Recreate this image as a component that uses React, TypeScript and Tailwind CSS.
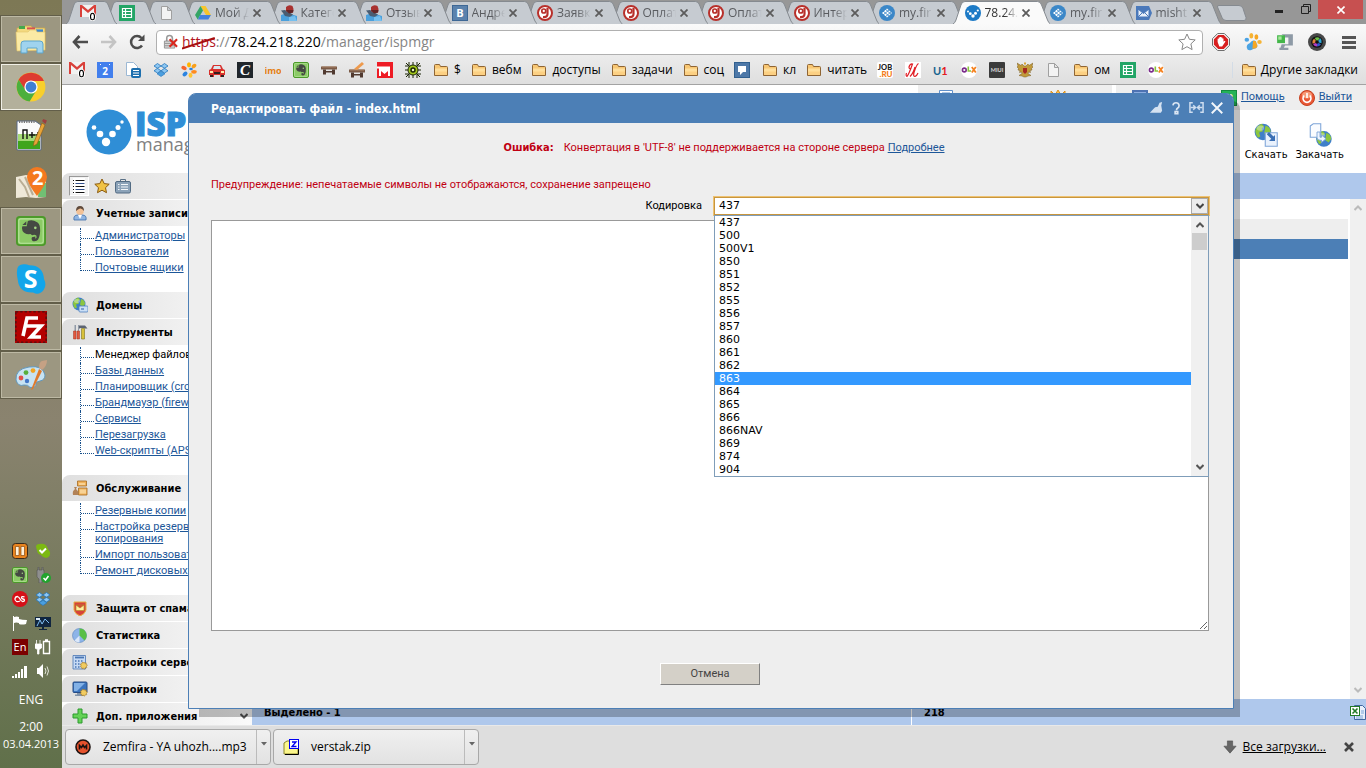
import { useState } from 'react'
import type { ReactNode } from 'react'

const folder = (
  <>
    <path d="M1.5 13.5V3.5q0-1 1-1h4l1 2h6q1 0 1 1v8z" fill="#f8c774" stroke="#8f6534" />
    <path d="M2 6.5h12v6.5H2z" fill="#ffdf9c" />
    <path d="M2 9.5h12v3.5H2z" fill="#fcd083" />
  </>
)
const page = <path d="M3.5 1.5h6l4 4v9h-10zM9.5 1.5v4h4" fill="#f3f3f3" stroke="#a0a0a0" />
const globe = (
  <>
    <circle cx="7" cy="7" r="6.5" fill="#3f7fc9" />
    <path d="M1 6q1-4 5-5.500l2 2-2 2 1 2-3 1 1 3-2 1q-2-3-2-5.500M9 2q4 1 4 5l-2 3-3-2z" fill="#8cc63f" />
    <ellipse cx="5" cy="4" rx="3" ry="2" fill="#fff" opacity=".35" />
  </>
)
const elephant = (
  <path
    d="M6.300 2.600Q9 1.800 11 3.200q1.500.5 1.800 3 .4 3.500-1 6.300-.9 1.300-3 .8-1-.8-.3-2l1.800-.4v1.200q1-.4.6-1.600-1-.9-2.300-.2L7.700 9.600Q4.600 10 3.500 8 2.800 6.500 3.400 5.500h2.300z M5.500 2.800v2H3.400z"
    fill="#454943"
  />
)
const dropbox = (
  <>
    <path d="M4.500 1.500 8 4 4.500 6.300 1 4zM11.500 1.500 15 4l-3.500 2.300L8 4zM4.500 6.300 8 8.800 4.500 11 1 8.800zM11.500 6.300 15 8.800 11.500 11 8 8.800z" fill="#8ec7f2" stroke="#2376bb" strokeWidth=".8" />
    <path d="m4 11.800 4-2.500 4 2.500-4 2.700z" fill="#4a9fe0" stroke="#2376bb" strokeWidth=".6" />
  </>
)
const paw = (
  <>
    <ellipse cx="6.500" cy="2.500" rx="1.800" ry="2.400" fill="#f6b333" />
    <ellipse cx="11" cy="3.500" rx="1.700" ry="2.400" fill="#f6a623" />
    <ellipse cx="2.500" cy="6" rx="2" ry="1.800" fill="#4ba3e3" />
    <ellipse cx="13.800" cy="8" rx="2" ry="1.700" fill="#f6b333" />
    <path d="M7 7q4-1 4 2 2 3-.5 4.500-2.500.5-4 1.500Q3 16 2.500 13T5 9z" fill="#4ba3e3" />
    <path d="M8 7q3-.5 3 2 2 3-.5 4.500l-3 .5z" fill="#f6a623" />
  </>
)
const bench = (
  <>
    <path d="M0 4.500h16v3H0z" fill="#7b5a46" />
    <path d="M1 4.500h14v1H1z" fill="#a98367" />
    <path d="M2 7.500h3v5H2zm9 0h3v5h-3zM5 9h6v1.500H5z" fill="#513a30" />
  </>
)
const gear = <path d="m12 8 .8 1.300 1.500-.4-.2 1.500 1.400.8-1.200 1 .5 1.500-1.600.1-.7 1.400-1.200-1-1.400.6-.2-1.600-1.500-.5.9-1.300-.8-1.300 1.500-.3.300-1.500 1.300.7z" fill="#f2cc60" stroke="#9f7522" strokeWidth=".6" />

const icons: Record<string, ReactNode> = {
  folder,
  page,
  elephantApp: (
    <>
      <rect x=".5" y=".5" width="15" height="15" rx="1.500" fill="#8ccb66" stroke="#4c9a2a" />
      <rect x="1.500" y="1.500" width="13" height="13" rx="1" fill="none" stroke="#b9e6a0" strokeWidth=".6" />
      {elephant}
      <circle cx="10.300" cy="6.300" r=".7" fill="#a7d887" />
    </>
  ),
  dropbox,
  bench,
  gmail: (
    <>
      <rect y="0" width="16" height="12" fill="#f2f2f2" />
      <path d="M0 12V0h2l6 5 6-5h2v12h-2V3L8 8 2 3v9z" fill="#d9403a" />
      <ellipse cx="12.500" cy="11.500" rx="3.500" ry="4.500" fill="#fff" />
      <ellipse cx="12.500" cy="11.500" rx="2" ry="3.300" fill="none" stroke="#000" strokeWidth="1.100" />
    </>
  ),
  sheets: (
    <>
      <rect width="16" height="16" fill="#23a566" />
      <path d="M3.500 3.500h9v9h-9zM3.500 6.500h9M3.500 9.500h9M6.500 3.500v9" fill="none" stroke="#fff" strokeWidth="1.200" />
    </>
  ),
  drive: (
    <>
      <path d="M5.500 1h5l5.500 9h-5z" fill="#f7c52b" />
      <path d="M5.500 1 8 5.500 2.700 14.500 0 10z" fill="#35a567" />
      <path d="M5.200 10H16l-2.700 4.500H2.700z" fill="#4381dd" />
    </>
  ),
  cat: (
    <>
      <path d="M0 10 6 8l10 3v5H0z" fill="#4ba0dc" />
      <path d="M0 5.500 4 5l8 4.500-3 2.500-5-1-2-3z" fill="#4a5d72" />
      <path d="M5 2q3-3 6.500-1l1 3-.5 3.500-4 .5-3-2z" fill="#a93230" />
      <path d="M5 5h7.500L12 7.500 8 8.500z" fill="#612526" />
      <path d="m8 12 6-1 2 5H8z" fill="#76c0ef" />
    </>
  ),
  vk: (
    <>
      <rect x=".5" y=".5" width="15" height="15" fill="#5b82ad" stroke="#3d6795" />
      <text x="8" y="12" textAnchor="middle" fontSize="11" fontWeight="700" fontFamily="Open Sans, sans-serif" fill="#fff">B</text>
    </>
  ),
  nine: (
    <>
      <circle cx="8" cy="8" r="7" fill="#fff" stroke="#b8302b" strokeWidth="2" />
      <circle cx="6.800" cy="6" r="2" fill="none" stroke="#b8302b" strokeWidth="1.700" />
      <path d="M10.500 3v6q0 3.500-4.500 3" fill="none" stroke="#b8302b" strokeWidth="2.200" />
    </>
  ),
  first: (
    <>
      <circle cx="8" cy="8" r="8" fill="#3b87c8" />
      <path d="m8 3.500 5 4.500-5 4.500L3 8z" fill="#fff" />
      <path d="m3 5 8 7M5 3l8 7M3 11l8-7M5 13l8-7" stroke="#3b87c8" strokeWidth=".9" />
    </>
  ),
  isp: (
    <>
      <circle cx="8" cy="8" r="8" fill="#1c7ac6" />
      <g fill="#fff">
        <circle cx="3" cy="6.500" r="1" />
        <circle cx="5.300" cy="8.700" r="1.400" />
        <circle cx="8" cy="11" r="1.700" />
        <circle cx="10.500" cy="8.200" r="1.500" />
        <circle cx="12.800" cy="5.500" r="1.100" />
      </g>
    </>
  ),
  mail: (
    <>
      <path d="M0 1h13l3 7-3 7H0z" fill="#4b79ba" />
      <path d="M2 4h11v8H2zl5.500 4.500L13 4M2 12l4-4M13 12 9 8" fill="#e9f0fa" stroke="#4b79ba" />
    </>
  ),
  calendar: (
    <>
      <rect width="16" height="16" fill="#427fed" />
      <path d="M3 2h1v1H3zm9 0h1v1h-1z" fill="#fff" />
      <text x="8" y="13" textAnchor="middle" fontSize="10" fontWeight="700" fontFamily="Open Sans, sans-serif" fill="#fff">2</text>
    </>
  ),
  docs: (
    <>
      <path d="M1.500.5h7l4 4v9h-11z" fill="#fff" stroke="#9cb8d4" />
      <rect x="6" y="6" width="10" height="10" rx="2" fill="#1d6fae" />
      <path d="M8 8.500h6M8 11h6M8 13.500h6" stroke="#fff" />
    </>
  ),
  flower: (
    <g>
      <ellipse cx="8" cy="2.800" rx="2" ry="2.600" fill="#ffb400" />
      <ellipse cx="13" cy="4" rx="2.600" ry="1.800" fill="#f9a01b" transform="rotate(-40 13 4)" />
      <ellipse cx="13" cy="9.800" rx="2.800" ry="1.900" fill="#ff8a1f" />
      <ellipse cx="9.500" cy="13.300" rx="1.900" ry="2.500" fill="#ffc533" />
      <ellipse cx="4" cy="12" rx="2.800" ry="2" fill="#2b83e0" transform="rotate(-40 4 12)" />
      <ellipse cx="3" cy="6" rx="2.700" ry="1.900" fill="#f7662d" transform="rotate(25 3 6)" />
      <ellipse cx="10" cy="7" rx="1.800" ry="1.300" fill="#2b83e0" />
    </g>
  ),
  car: (
    <>
      <path d="M4 3h8l2 4 2 1v5h-3v2h-2v-2H5v2H2v-2H0V8l2-1z" fill="#d8312c" />
      <path d="M5 4h6l1 3H4z" fill="#d9e6ee" />
      <path d="M1 9h3v2H1zm11 0h3v2h-3z" fill="#fff0b0" />
      <path d="M5 10h6v2H5zM1 13h3v2H1zm11 0h3v2h-3z" fill="#342020" />
    </>
  ),
  letterC: (
    <>
      <rect width="16" height="16" fill="#20262b" />
      <text x="8" y="13" textAnchor="middle" fontSize="15" fontStyle="italic" fontWeight="700" fontFamily="Liberation Serif, serif" fill="#fff">C</text>
    </>
  ),
  imo: <text x="8" y="11.500" textAnchor="middle" fontSize="9" fontWeight="700" fontFamily="Open Sans, sans-serif" fill="#e57f12">imo</text>,
  benchPencil: (
    <>
      <g transform="translate(0 3)">{bench}</g>
      <path d="m5 7 8-7 2 2-7 6z" fill="#ee9a4d" />
    </>
  ),
  redM: (
    <>
      <rect width="16" height="16" fill="#ee1c25" />
      <path d="M0 4.500h13V14h-2V9l-3.500 3L4 9v5H2V6.500H0z" fill="#fff" />
    </>
  ),
  bug: (
    <>
      <path d="M1 1l4 4M15 1l-4 4M1 15l4-4M15 15l-4-4M0 8h3M13 8h3M8 0v3M8 13v3M0 4h4M12 4h4M0 12h4M12 12h4M4 0v4M12 0v4M4 12v4M12 12v4" stroke="#1b2405" />
      <circle cx="8" cy="8" r="5" fill="#a3c91d" stroke="#1b2405" />
      <circle cx="8" cy="8" r="2" fill="#e9f4b8" stroke="#1b2405" strokeWidth="1.500" />
    </>
  ),
  chat: (
    <>
      <rect x=".5" y=".5" width="15" height="15" fill="#4d78a8" stroke="#31608f" />
      <path d="M4 4h8v6H9l-3 3v-3H4z" fill="#fff" />
    </>
  ),
  job: (
    <>
      <rect width="16" height="16" rx="2" fill="#fff" />
      <text x="8" y="7.500" textAnchor="middle" fontSize="7.500" fontWeight="900" fontFamily="Lato, sans-serif" fill="#222">JOB</text>
      <text x="9" y="15" textAnchor="middle" fontSize="8" fontWeight="900" fontFamily="Lato, sans-serif" fill="#f47c20">.RU</text>
    </>
  ),
  redLines: (
    <>
      <rect width="16" height="16" fill="#fff" />
      <path d="M1.500 11q-1 3 .5 3.500Q4 12 7.500 2 5 1.500 4 5q0 2 1.500 1.500M5 14.500Q8 12 10 5M13.500 1.500q-2 1-4.500 9-1 4 1 4 2-1 3-3.500" fill="none" stroke="#e11f26" strokeWidth="1.200" />
    </>
  ),
  u1: (
    <text y="12.500" fontSize="11" fontWeight="700" fontFamily="Lato, sans-serif">
      <tspan x="0" fill="#17638e">U</tspan>
      <tspan fill="#e31b23">1</tspan>
    </text>
  ),
  olx: (
    <>
      <circle cx="8" cy="8" r="8" fill="#fff" />
      <circle cx="3.300" cy="8" r="1.900" fill="none" stroke="#7b2d8b" strokeWidth="1.600" />
      <path d="M7.300 4.500V9H10" fill="none" stroke="#8bc53f" strokeWidth="1.600" />
      <path d="m10.800 5 4 5.500m0-5.500-4 5.500" stroke="#f58220" strokeWidth="1.800" />
    </>
  ),
  mui: (
    <>
      <rect width="16" height="16" rx="1" fill="#3b3b3b" />
      <text x="8" y="10" textAnchor="middle" fontSize="5.500" fontWeight="700" fontFamily="Lato, sans-serif" fill="#ddd">MIUI</text>
    </>
  ),
  eagle: (
    <>
      <path d="M7 4 5 2 4 3.500 0 1l1 3-1 1 1.500 1.500L1 8l2 .5-.5 2 2-.5.5 1.500-3 2 3 .5 2 1h2l2-1 3-.5-3-2 .5-1.500 2 .5-.5-2L15 8l-.5-1.500L16 5l-1-1 1-3-4 2.500L11 2 9 4z" fill="#c19a3a" stroke="#7b5c20" strokeWidth=".5" />
      <path d="M6 6h4v4l-2 2-2-2z" fill="#a52820" />
      <path d="M7 .5h2v2H7z" fill="#d7a333" />
    </>
  ),
  stop: (
    <>
      <path d="M5 .5h6L15.500 5v6L11 15.500H5L.5 11V5z" fill="#fff" stroke="#555" strokeWidth=".8" />
      <path d="M5.500 1.700h5l3.800 3.800v5l-3.800 3.800h-5l-3.800-3.800v-5z" fill="#d81f1f" />
      <path d="M5 8V5h1V4h1V3.500h1.200V4h1v.8h1v3l1-1 .8.800L9 12H6.500z" fill="#fff" />
    </>
  ),
  paw,
  clamp: (
    <>
      <path d="M5 1h10v10H8l-1 2h4v2H3v-2h1l1-3h6V4H8z" fill="#8e9aa6" />
      <path d="M1 2h7v7H1z" fill="#43b649" />
      <path d="M2 3h3v3H2z" fill="#a7e59b" />
    </>
  ),
  lens: (
    <>
      <circle cx="8" cy="8" r="8" fill="#484848" />
      <circle cx="8" cy="8" r="5.200" fill="#111" />
      <path d="M8 8 6 4.500a4 4 0 0 1 4.500 0z" fill="#6cc04a" />
      <path d="m8 8 3-3.300A4 4 0 0 1 12 9z" fill="#2ba6d4" />
      <path d="m8 8 3.500 2A4 4 0 0 1 8 12z" fill="#3555c9" />
      <path d="M8 8v4a4 4 0 0 1-3.500-2z" fill="#b13bc4" />
      <path d="M8 8 4.200 9.500A4 4 0 0 1 5.500 5z" fill="#e2803b" />
      <circle cx="8" cy="8" r="1.600" fill="#111" />
    </>
  ),
  insecure: (
    <>
      <path d="M4 7V4q0-3 3-3t3 3v3" fill="none" stroke="#999" strokeWidth="1.700" />
      <path d="M1.500 7h11v7.500h-11zM2 9.500h10M2 12h10" fill="#d7d7d7" stroke="#8a8a8a" strokeWidth=".9" />
      <path d="m7 5 8 8m0-8-8 8" stroke="#d9261c" strokeWidth="2.200" />
    </>
  ),
  list: (
    <>
      <rect x="2" width="12" height="16" fill="#fff" />
      <path d="M2 2.500h1M2 5.500h1M2 8.500h1M2 11.500h1M2 14.500h1M4.500 2.500h9M4.500 8.500h9M4.500 14.500h9" stroke="#111" />
      <path d="M4.500 5.500h9M4.500 11.500h9" stroke="#33508c" />
    </>
  ),
  star: <path d="m8 1 2.200 4.600 5 .6-3.700 3.500 1 5L8 12.200l-4.500 2.500 1-5L.8 6.200l5-.6z" fill="#f0c245" stroke="#8a5a10" />,
  board: (
    <>
      <path d="M5.500 3V1.500h5V3" fill="none" stroke="#5a7187" />
      <rect x=".5" y="3.500" width="15" height="11.500" rx="1.500" fill="#8ba2b8" stroke="#526b83" />
      <path d="M3 6.500h1.500M6 6.500h7M3 9h1.500M6 9h7M3 11.500h1.500M6 11.500h7" stroke="#f2f6fa" />
    </>
  ),
  user: (
    <>
      <path d="M2 15q-1-5 4-5h4q5 0 4 5z" fill="#8fb5e3" stroke="#3e6da8" strokeWidth=".8" />
      <path d="M6 10h4l-2 4z" fill="#fff" />
      <circle cx="8" cy="6" r="3.800" fill="#f3c195" />
      <path d="M4 6q0-5 4-5t4 5q-2-3-4-2.500T4 6" fill="#5f4a3c" />
    </>
  ),
  domain: (
    <>
      {globe}
      <rect x="7" y="9" width="9" height="6" rx="1" fill="#cbdff6" stroke="#4e7fbe" strokeWidth=".8" />
      <path d="M9 12h3" stroke="#2d5fa5" />
    </>
  ),
  tools: (
    <>
      <path d="M6.500 1.500H13l2.500 3h-3V4h-4L6.500 5z" fill="#5c6473" />
      <path d="M9.500 4.500h3V15h-3z" fill="#d8c13a" stroke="#7f741c" strokeWidth=".6" />
      <path d="M2.500 1H4v6H2.500zM6 1h1v6H6z" fill="#8f99a6" />
      <path d="M1.500 7H4v8H1.500zM5 7h2.500v8H5z" fill="#e2593f" stroke="#a33220" strokeWidth=".5" />
    </>
  ),
  boxes: (
    <>
      <path d="M5.500 1h9v5h-9zM6.500 8H15v7H6.500z" fill="#f1b35c" stroke="#a66b21" strokeWidth=".8" />
      <path d="M8 3v2M10 3v2M12 3v2M9 9.500v4M11 9.500v4M13 9.500v4" stroke="#fff1cd" />
      <path d="M1 15q-1-4 2-6l-1-2h3l-1 2q3 2 2 6z" fill="#b28257" />
    </>
  ),
  shield: (
    <>
      <path d="M2 2h12v8q-1 4-6 6-5-2-6-6z" fill="#d7423a" stroke="#e6b040" />
      <path d="M4 5h8v5.500H4zl4 3 4-3" fill="#fff0a0" stroke="#b68c27" strokeWidth=".7" />
    </>
  ),
  pie: (
    <>
      <circle cx="7.500" cy="8.500" r="7" fill="#8db4e8" stroke="#5a84be" strokeWidth=".6" />
      <path d="M7.500 8.500V1.500a7 7 0 0 1 5 12z" fill="#59bf46" />
      <path d="m7.500 8.500-5 5a7 7 0 0 0 5 2z" fill="#dbe8fa" />
    </>
  ),
  calcGear: (
    <>
      <path d="M1 1.500h12.500V15H1z" fill="#c6daf4" stroke="#4a76b4" strokeWidth=".8" />
      <path d="M3 3.500h9" stroke="#4a76b4" strokeWidth="1.800" />
      <path d="M3 7h1.500M6 7h1.500M9 7h1.500M3 10h1.500M6 10h1.500M3 13h1.500M6 13h1.500" stroke="#4a76b4" strokeWidth="1.500" />
      {gear}
    </>
  ),
  screenGear: (
    <>
      <rect x="1" y="1" width="14" height="10.500" rx="1" fill="#3b74be" stroke="#274c85" />
      <path d="m2 2 11 0-8 8H2z" fill="#82b1e6" />
      <path d="M5 12h5v1.500h2V15H3v-1.500h2z" fill="#8294aa" />
      {gear}
    </>
  ),
  plus: <path d="M6 1h4v5h5v4h-5v5H6v-5H1V6h5z" fill="#65d257" stroke="#2c9b2e" />,
  bluePage: <path d="M1.500.5h13v15h-13zM4 3h8v4H4z" fill="#fff" stroke="#6190ca" />,
  crown: <path d="m1 1 4 4 3-5 3 5 4-4v10H1z" fill="#ffc34a" stroke="#db901e" />,
  monitor: <path d="M1 1h14v11H1z" fill="#8dade0" stroke="#4d72b2" strokeWidth="2" />,
  help: (
    <>
      <rect x=".5" y=".5" width="15" height="15" fill="#23b356" stroke="#148a3f" />
      <text x="9" y="12" textAnchor="middle" fontSize="11" fontWeight="700" fontFamily="DejaVu Sans, sans-serif" fill="#fff">?</text>
    </>
  ),
  power: (
    <>
      <circle cx="8" cy="8" r="7.500" fill="#e95735" stroke="#c6411f" />
      <ellipse cx="8" cy="5" rx="5" ry="3.500" fill="#f59a78" />
      <path d="M5.200 5.500a4 4 0 1 0 5.600 0M8 3v5" fill="none" stroke="#fff" strokeWidth="1.600" />
    </>
  ),
  download: (
    <>
      <g transform="scale(.85)">{globe}</g>
      <path d="M7.500 6.500h8v9h-8z" fill="#eaf2fd" stroke="#7da4d8" strokeWidth=".7" />
      <path d="m8.500 7.500 3 3-1.500 1.500h4V8l-1 1-3-3z" fill="#3a6fb5" />
    </>
  ),
  upload: (
    <>
      <g transform="translate(5 5) scale(.8)">{globe}</g>
      <path d="M1.500 2 3.500.5h5v9h-7z" fill="#fafcff" stroke="#7da4d8" strokeWidth=".7" />
      <path d="M6 6v3.500q0 2 2 2h1v1.500l3-2.500L9 8v1.500H8V6z" fill="#eef5fd" stroke="#7da4d8" strokeWidth=".6" />
    </>
  ),
  excel: (
    <>
      <path d="M4.500 1.500h8l3 3v11h-11z" fill="#e8f0fb" stroke="#41669f" />
      <path d="M11 7h3M11 9h3M6 12h7M6 14h7" stroke="#7da4d8" />
      <rect x=".5" y="2.500" width="9" height="9" fill="#fff" stroke="#237a26" />
      <path d="m2.500 4.500 5 5m0-5-5 5" stroke="#237a26" strokeWidth="1.600" />
    </>
  ),
  mp3: (
    <>
      <circle cx="8" cy="8" r="7" fill="#e5522d" stroke="#1c1210" strokeWidth="1.600" />
      <path d="M4.500 10.500v-4l2 2 1.500-2.500 1.500 2.500 2-2v4" fill="none" stroke="#1c1210" strokeWidth="1.600" />
    </>
  ),
  zip: (
    <>
      <path d="M1 15V4l3-2h6v2h5v11z" fill="#fbf68d" stroke="#8a8428" />
      <path d="M2 15.500h13.500V10" fill="none" stroke="#000" />
      <rect x="6.500" y=".5" width="9" height="9" fill="#fff" stroke="#0000f0" />
      <path d="M9 3h4L9 7.500h4.500" fill="none" stroke="#0000f0" strokeWidth="1.300" />
    </>
  ),
  arrowDown: <path d="M5 1h6v6h4l-7 8-7-8h4z" fill="#666" stroke="#444" strokeWidth=".6" />,
  explorer: (
    <>
      <path d="M1 2.500h3l1-1h3l1 1h6v11H1z" fill="#f3d97f" stroke="#c9a646" strokeWidth=".4" />
      <path d="M2 1.500h3V3H2z" fill="#43a94c" />
      <path d="M6 2.200h4v1H6z" fill="#d9534f" />
      <path d="M10.500 3.200H14v1.300h-3.500z" fill="#3c87cf" />
      <path d="M.5 4.500h6l1-1h3l.5 1h4v9l-14 .5z" fill="#fbeaa4" stroke="#e0c26a" strokeWidth=".3" />
      <path d="M3 15v-4.500q0-1.500 1.500-1.500h8q1.500 0 1.500 1.500V15h-3v-2.500H6V15z" fill="#9fd3ee" stroke="#5ca6cc" strokeWidth=".5" />
    </>
  ),
  chrome: (
    <>
      <circle cx="8" cy="8" r="7.200" fill="#f8cf2b" />
      <path d="M1.800 4.400A7.200 7.200 0 0 1 14.500 5H8l-3 4.500z" fill="#dd3b31" />
      <path d="M1.800 4.400A7.200 7.200 0 0 0 7.300 15.200L10.500 10l-5 0z" fill="#4caf3d" />
      <circle cx="8" cy="8" r="3.300" fill="#fff" />
      <circle cx="8" cy="8" r="2.700" fill="#3f7fd2" />
    </>
  ),
  notepad: (
    <>
      <path d="M1 1h9l3 2v12.500H1z" fill="#fbfbfb" stroke="#5b6b86" strokeWidth=".5" />
      <path d="M1.500 10h11v5h-11z" fill="#3fa51c" />
      <path d="M1.500 7.500h11V11h-11z" fill="#a4d977" />
      <path d="M2 1.500h8" stroke="#777" strokeDasharray=".6 .6" />
      <path d="M4 10V5.500h2V10M8.500 6.500v3M7 8h3M11.500 6.500v3M10.200 8h2.500" fill="none" stroke="#111" strokeWidth=".7" />
      <path d="m13.500 2 1.500 1-4 9.500-1.800 1 .3-2z" fill="#e8a437" stroke="#8c5a18" strokeWidth=".3" />
      <path d="m13.500 1 .7-1 1.800.8-.8 1.700z" fill="#9d4040" />
    </>
  ),
  maps: (
    <>
      <path d="m.5 5 5-1 5 1 5-1v11l-5 .5-5-.5-5 .5z" fill="#eee8d8" />
      <path d="M2 6l3 4 2 5M5 5l4 9" stroke="#b9ae95" fill="none" />
      <path d="M12 8h3.500v7h-4z" fill="#71bf73" />
      <path d="M11 0a5 5 0 0 1 5 5q0 3-5 9.500Q6 8 6 5a5 5 0 0 1 5-5" fill="#f4791f" />
      <text x="11.300" y="9" textAnchor="middle" fontSize="10" fontWeight="700" fontFamily="Open Sans, sans-serif" fill="#fff">2</text>
    </>
  ),
  skype: (
    <>
      <path d="M1 4Q1 .5 4.500.6 6 .5 7 1.100 14 1 14.500 8q1.500 3-.2 5.500-2.300 3-5.300 1.200Q2 15 1.400 8.500.8 6 1 4" fill="#12a5ea" />
      <text x="7.800" y="12.300" textAnchor="middle" fontSize="12.500" fontWeight="700" fontFamily="Open Sans, sans-serif" fill="#fff">S</text>
    </>
  ),
  filezilla: (
    <>
      <rect width="16" height="16" fill="#b40000" />
      <rect x=".4" y=".4" width="15.200" height="15.200" fill="none" stroke="#5e0d0d" strokeWidth=".8" strokeDasharray="1.200 1" />
      <path d="M4 12.500 6 3.500h5.500M5.200 7.500h4M9 7.500h4l-5 5.500h5" fill="none" stroke="#fff" strokeWidth="1.800" />
    </>
  ),
  paint: (
    <>
      <path d="M.5 10.500Q0 5 7 4t8 4q0 2.500-2.500 3t-2 1.500q0 2-3 1.700-1-1.500-3-1.200Q1.500 14 .5 10.500" fill="#c7e3f3" stroke="#6298bd" strokeWidth=".5" />
      <circle cx="3" cy="9.500" r="1.200" fill="#e2504a" />
      <circle cx="5.500" cy="6.800" r="1.200" fill="#58ae3c" />
      <circle cx="9" cy="5.800" r="1.200" fill="#f1a524" />
      <circle cx="6" cy="11" r="1.100" fill="#4377c8" />
      <path d="m8 15.500 4-10.500 1.500 1L9 15z" fill="#df7a2d" />
      <path d="M12 4.500q0-3 1.500-3.500l2.500-.5q0 3-2.500 5z" fill="#c5a184" />
    </>
  ),
  pause: (
    <>
      <rect x=".5" y=".5" width="15" height="15" rx="3" fill="#e8841f" stroke="#3a2b1b" />
      <path d="M3.500 3.500h3.500v9H3.500zm5.500 0h3.500v9H9z" fill="#fff3dc" stroke="#8b4b10" strokeWidth=".7" />
    </>
  ),
  skypeOk: (
    <>
      <path d="M1 4q0-3 3.500-3 7-1 8.500 5l2 3q1 5-4 6-4-1-5-3-4-1-4-5z" fill="#7cb912" />
      <path d="m4.500 7 2.500 2.500L11 5.500" fill="none" stroke="#fff" strokeWidth="2" />
    </>
  ),
  usb: (
    <>
      <path d="M3 0h1v3h3V0h1v3h1v7l-2 2v4H4v-4L2 10V3h1z" fill="#8f8f8f" stroke="#555" strokeWidth=".6" />
      <circle cx="11" cy="11" r="5" fill="#22a32e" />
      <path d="m8.500 11 2 2 3-4" fill="none" stroke="#fff" strokeWidth="1.500" />
    </>
  ),
  lastfm: (
    <>
      <circle cx="8" cy="8" r="8" fill="#d51018" />
      <path d="M8 10Q6 11 4.500 10.500 2.500 9.500 3 7.500t2.500-2Q7 6 8 8t2.500 2.500q2 0 2-1.200T11 8 9.500 6.500t3-.7" fill="none" stroke="#fff" strokeWidth="1.300" />
    </>
  ),
  flag: <path d="M1 16V1h1v1q3-1 5 0v2q3 1 8 1l-1 4q-4 1-7 0V8Q4 7 2 8v8z" fill="#fff" />,
  network: (
    <>
      <path d="M0 2h16v10H9v2h3v1H4v-1h3v-2H0z" fill="#10253f" />
      <path d="m2 11 3-6 2 4 3-5 4 4" fill="none" stroke="#7ebcf1" />
      <path d="M1 3h4v2H1z" fill="#dbe9f5" />
    </>
  ),
  lang: (
    <>
      <rect width="16" height="16" fill="#7b0000" />
      <text x="8" y="12" textAnchor="middle" fontSize="11" fontFamily="Open Sans, sans-serif" fill="#fff">En</text>
    </>
  ),
  battery: (
    <>
      <path d="M8.500 2.500h6v12h-6zM10 1h3" fill="none" stroke="#fff" strokeWidth="1.400" />
      <path d="M1.500 1v4M5 1v4M0 5h6.500v4L4 10.500V15H2.500v-4.500L0 9z" fill="#fff" stroke="#fff" strokeWidth=".8" />
    </>
  ),
  signal: <path d="M0 13h2v2H0zm3-2h2v4H3zm3-2h2v6H6zm3-3h2v9H9zm3-3h3v12h-3z" fill="#fff" />,
  sound: (
    <>
      <path d="M2 5h2l4-4v14l-4-4H2z" fill="#fff" />
      <path d="M10 5q2 3 0 6M12 3.500q3 4.500 0 9" fill="none" stroke="#e3e5da" />
    </>
  ),
  pin: <path d="m12 2 3-1-1 4 1 6-1.500 2.500H1L5 9l2-2 3-.5z" fill="#d5e2f1" />,
  question: <path d="M4.500 5Q5 2 8 2t3.500 3q0 2-1.500 3T8.500 10.500M7 12h3v2.500H7z" fill="none" stroke="#dbe6f3" strokeWidth="1.900" />,
  fit: <path d="M4 3H1v10h3M12 3h3v10h-3M2 8h5M14 8H9M4.500 5.500 7 8l-2.500 2.500M11.500 5.500 9 8l2.500 2.500" fill="none" stroke="#cfdef0" strokeWidth="1.600" />,
  cross: <path d="m2 2 12 12M14 2 2 14" stroke="#f2f6fb" strokeWidth="2.200" />,
}

function Icon({ name, className = 'size-4' }: { name: string; className?: string }) {
  return (
    <svg aria-hidden="true" viewBox="0 0 16 16" className={`block shrink-0 ${className}`}>
      {icons[name]}
    </svg>
  )
}

function Chevron({ className = '', up = false }: { className?: string; up?: boolean }) {
  return (
    <svg aria-hidden="true" viewBox="0 0 8 6" className={`block h-[6px] w-2 ${className}`}>
      <path d={up ? 'M.5 5 4 1.500 7.500 5' : 'M.5 1 4 4.500 7.500 1'} fill="none" stroke="currentColor" strokeWidth="2" />
    </svg>
  )
}

const apps = [
  { icon: 'explorer', label: 'Проводник', size: 'size-8', state: 'open' },
  { icon: 'chrome', label: 'Google Chrome', size: 'size-8', state: 'active' },
  { icon: 'notepad', label: 'Notepad++', size: 'size-8', state: 'idle' },
  { icon: 'maps', label: '2ГИС', size: 'size-8', state: 'idle' },
  { icon: 'elephantApp', label: 'Evernote', size: 'size-[30px]', state: 'open' },
  { icon: 'skype', label: 'Skype', size: 'size-8', state: 'open' },
  { icon: 'filezilla', label: 'FileZilla', size: 'size-8', state: 'open' },
  { icon: 'paint', label: 'Paint', size: 'size-8', state: 'open' },
]

const appStyles: Record<string, string> = {
  open: 'border-[#bdb9a4] bg-[#9c9781] outline-[#625e49]',
  active: 'border-[#f1f0e6] bg-[#b3b09b] outline-[#625e49]',
  idle: 'border-transparent outline-transparent',
}

const tray = ['pause', 'skypeOk', 'elephantApp', 'usb', 'lastfm', 'dropbox', 'flag', 'network', 'lang', 'battery', 'signal', 'sound']

function Taskbar() {
  return (
    <aside className="flex w-[62px] shrink-0 flex-col bg-linear-to-b from-[#7d7855] via-[#8a836f] via-55% to-[#60704a] pt-4 font-['Open_Sans',sans-serif] text-xs text-white">
      <nav className="flex flex-col gap-[2px]">
        {apps.map((app) => (
          <button key={app.label} type="button" aria-label={app.label} className={`mx-px flex h-[46px] items-center justify-center border outline-1 ${appStyles[app.state]}`}>
            <Icon name={app.icon} className={app.size} />
          </button>
        ))}
      </nav>
      <div className="mx-3 mt-auto grid grid-cols-2 gap-2">
        {tray.map((name) => (
          <Icon key={name} name={name} />
        ))}
      </div>
      <div className="mt-3 pb-4 text-center leading-[17px]">
        <div>ENG</div>
        <div className="mt-[10px]">2:00</div>
        <div className="text-[11px]">03.04.2013</div>
      </div>
    </aside>
  )
}

type Tab = { icon: string; title?: string; active?: boolean }

const tabs: Tab[] = [
  { icon: 'gmail' },
  { icon: 'sheets' },
  { icon: 'page' },
  { icon: 'drive', title: 'Мой Д' },
  { icon: 'cat', title: 'Катего' },
  { icon: 'cat', title: 'Отзыв' },
  { icon: 'vk', title: 'Андре' },
  { icon: 'nine', title: 'Заявк' },
  { icon: 'nine', title: 'Оплат' },
  { icon: 'nine', title: 'Оплат' },
  { icon: 'nine', title: 'Интер' },
  { icon: 'first', title: 'my.fir' },
  { icon: 'isp', title: '78.24.', active: true },
  { icon: 'first', title: 'my.fir' },
  { icon: 'mail', title: 'misht' },
]

function TabStrip() {
  return (
    <div className="flex h-6 bg-[#979797] pl-2">
      <div role="tablist" className="flex min-w-0 flex-1 pt-px">
        {tabs.map((tab, index) => {
          const width = tab.title ? 98 : 52
          return (
            <div
              key={index}
              className={`relative flex items-center ${tab.title ? 'min-w-0 flex-1 pr-3 pl-2' : 'w-[39px] pl-[10px]'}`}
              style={{ zIndex: tab.active ? 30 : 20 - index }}
            >
              <svg aria-hidden="true" viewBox={`0 0 ${width} 23`} preserveAspectRatio="none" className="absolute inset-y-0 -right-2 -left-1 -z-10 h-full w-[calc(100%+12px)]">
                <path
                  d={`M0 23Q2 22 3 19L8 4Q9 .5 12 .5H${width - 13}Q${width - 10} .5 ${width - 9} 4L${width - 3} 19Q${width - 2} 22 ${width} 23`}
                  fill={tab.active ? '#fafafa' : '#c6cbd1'}
                  stroke="#858a90"
                />
              </svg>
              <Icon name={tab.icon} />
              {tab.title ? (
                <>
                  <button
                    type="button"
                    role="tab"
                    aria-selected={tab.active === true}
                    className={`ml-1 min-w-0 flex-1 text-left whitespace-nowrap [mask-image:linear-gradient(to_right,black_60%,transparent)] ${tab.active ? 'text-[#333]' : 'text-[#5a5c60]'}`}
                  >
                    {tab.title}
                  </button>
                  <button type="button" aria-label="Закрыть вкладку" className="ml-1">
                    <svg viewBox="0 0 8 8" className="block size-2">
                      <path d="m.5.5 7 7m0-7-7 7" stroke="#5c5c5c" strokeWidth="1.800" />
                    </svg>
                  </button>
                </>
              ) : null}
            </div>
          )
        })}
      </div>
      <div className="flex w-[153px] shrink-0 items-start pl-1 text-[#222]">
        <button type="button" aria-label="Новая вкладка" className="mt-[5px]">
          <svg viewBox="0 0 30 16" className="block h-4 w-[30px]">
            <path d="M.5 2Q0 .5 2 .5h20q3 0 4 3l3 9q.5 3-2 3H9q-3 0-4-3z" fill="#c6cbd1" stroke="#858a90" />
          </svg>
        </button>
        <button type="button" aria-label="Свернуть" className="mt-1 ml-6 px-1 py-[6px]">
          <span className="block h-[3px] w-2 bg-[#222]" />
        </button>
        <button type="button" aria-label="Развернуть" className="mt-1 ml-[14px]">
          <svg viewBox="0 0 10 10" className="block size-[10px]">
            <path d="M2.500 2.500V.5h7v7h-2M.5 2.500h7v7h-7z" fill="none" stroke="currentColor" />
          </svg>
        </button>
        <button type="button" aria-label="Закрыть" className="mr-[3px] ml-auto flex h-[19px] w-[45px] items-center justify-center bg-[#c75050]">
          <svg viewBox="0 0 8 8" className="block size-2">
            <path d="m.5.5 7 7m0-7-7 7" stroke="#fff" strokeWidth="1.600" />
          </svg>
        </button>
      </div>
    </div>
  )
}

function AddressBar() {
  return (
    <div className="flex h-[34px] items-center pr-[10px] pl-[10px] text-[#555]">
      <button type="button" aria-label="Назад">
        <svg viewBox="0 0 16 14" className="block h-[14px] w-4">
          <path d="M7.500 1 2 7l5.500 6M2 7h14" fill="none" stroke="#4d4d4d" strokeWidth="2.600" />
        </svg>
      </button>
      <button type="button" aria-label="Вперед" className="ml-[13px]">
        <svg viewBox="0 0 16 14" className="block h-[14px] w-4">
          <path d="M8.500 1 14 7l-5.500 6M14 7H0" fill="none" stroke="#c4c4c4" strokeWidth="2.600" />
        </svg>
      </button>
      <button type="button" aria-label="Обновить" className="ml-3">
        <svg viewBox="0 0 16 16" className="block size-4">
          <path d="M13 11.500A6 6 0 1 1 12.500 4" fill="none" stroke="#4d4d4d" strokeWidth="2.500" />
          <path d="M15.500.5v6.500H9z" fill="#4d4d4d" />
        </svg>
      </button>
      <div className="ml-[11px] flex h-[25px] min-w-0 flex-1 items-center rounded-sm border border-[#b0b0b0] bg-white px-[6px] text-sm leading-6">
        <Icon name="insecure" className="h-4 w-[15px]" />
        <span className="relative ml-1 text-[#b3151d]">
          https
          <svg aria-hidden="true" viewBox="0 0 34 14" className="absolute inset-x-0 top-[6px] h-[14px] w-full">
            <path d="M0 12.500 33 2" stroke="#a80f0f" strokeWidth="2" />
          </svg>
        </span>
        <span className="text-[#858585]">
          ://<span className="text-black">78.24.218.220</span>/manager/ispmgr
        </span>
        <button type="button" aria-label="Добавить в закладки" className="ml-auto">
          <svg viewBox="0 0 18 18" className="block size-[18px]">
            <path d="m9 1 2.400 5.300 5.800.6-4.300 4 1.200 5.700L9 13.700l-5.100 2.900 1.200-5.700-4.300-4 5.800-.6z" fill="#fff" stroke="#888" />
          </svg>
        </button>
      </div>
      <div className="ml-[9px] flex items-center gap-[14px]">
        {['stop', 'paw', 'clamp', 'lens'].map((name) => (
          <button key={name} type="button" aria-label={name}>
            <Icon name={name} className="size-[18px]" />
          </button>
        ))}
        <button type="button" aria-label="Меню" className="ml-[2px] flex w-[14px] flex-col gap-[2px]">
          <span className="h-[3px] bg-[#555]" />
          <span className="h-[3px] bg-[#555]" />
          <span className="h-[3px] bg-[#555]" />
        </button>
      </div>
    </div>
  )
}

const bookmarks: { icon: string; label?: string }[] = [
  { icon: 'gmail' },
  { icon: 'calendar' },
  { icon: 'docs' },
  { icon: 'dropbox' },
  { icon: 'flower' },
  { icon: 'car' },
  { icon: 'letterC' },
  { icon: 'imo' },
  { icon: 'elephantApp' },
  { icon: 'bench' },
  { icon: 'benchPencil' },
  { icon: 'redM' },
  { icon: 'bug' },
  { icon: 'folder', label: '$' },
  { icon: 'folder', label: 'вебм' },
  { icon: 'folder', label: 'доступы' },
  { icon: 'folder', label: 'задачи' },
  { icon: 'folder', label: 'соц' },
  { icon: 'chat' },
  { icon: 'folder', label: 'кл' },
  { icon: 'folder', label: 'читать' },
  { icon: 'job' },
  { icon: 'redLines' },
  { icon: 'u1' },
  { icon: 'olx' },
  { icon: 'mui' },
  { icon: 'eagle' },
  { icon: 'page' },
  { icon: 'folder', label: 'ом' },
  { icon: 'sheets' },
  { icon: 'olx' },
]

function BookmarksBar() {
  return (
    <nav className="flex h-[26px] items-center gap-3 border-b border-[#a3a3a3] pr-2 pb-[3px] pl-[7px] whitespace-nowrap text-black">
      {bookmarks.map((bookmark, index) => (
        <a key={index} href="#" aria-label={bookmark.label ?? bookmark.icon} className="flex items-center gap-[5px]">
          <Icon name={bookmark.icon} />
          {bookmark.label ? <span className="-mr-[2px]">{bookmark.label}</span> : null}
        </a>
      ))}
      <a href="#" className="ml-auto flex items-center gap-1 border-l border-[#d3dce6] pl-2">
        <Icon name="folder" />
        <span>Другие закладки</span>
      </a>
    </nav>
  )
}

const sections = [
  { icon: 'user', title: 'Учетные записи', links: ['Администраторы', 'Пользователи', 'Почтовые ящики'] },
  { icon: 'domain', title: 'Домены', links: [] },
  {
    icon: 'tools',
    title: 'Инструменты',
    links: ['Менеджер файлов', 'Базы данных', 'Планировщик (cron)', 'Брандмауэр (firewall)', 'Сервисы', 'Перезагрузка', 'Web-скрипты (APS)'],
  },
  { icon: 'boxes', title: 'Обслуживание', links: ['Резервные копии', 'Настройка резервного копирования', 'Импорт пользователей', 'Ремонт дисковых квот'] },
  { icon: 'shield', title: 'Защита от спама', links: [] },
  { icon: 'pie', title: 'Статистика', links: [] },
  { icon: 'calcGear', title: 'Настройки сервера', links: [] },
  { icon: 'screenGear', title: 'Настройки', links: [] },
  { icon: 'plus', title: 'Доп. приложения', links: [] },
]

function Sidebar() {
  return (
    <aside className="flex w-[190px] shrink-0 flex-col overflow-hidden bg-white">
      <div className="flex h-[88px] shrink-0 items-center pt-[7px] pl-6">
        <svg role="img" aria-label="ISPmanager" viewBox="0 0 160 50" className="block h-[50px] w-40 shrink-0">
          <circle cx="23" cy="24" r="22.500" fill="#2f8ed6" />
          <g fill="#fff">
            <circle cx="8" cy="19.500" r="2.300" />
            <circle cx="14" cy="26" r="3.300" />
            <circle cx="20" cy="34" r="4.200" />
            <circle cx="26.500" cy="26" r="3.300" />
            <circle cx="32" cy="19.500" r="2.500" />
            <circle cx="36" cy="14" r="1.700" />
          </g>
          <text x="49" y="28" fontSize="33" fontWeight="800" fontFamily="Open Sans, sans-serif" fill="#2f8ed6" stroke="#2f8ed6" strokeWidth="1">ISP</text>
          <text x="50" y="43" fontSize="18" fontFamily="Open Sans, sans-serif" fill="#808080">manager</text>
        </svg>
      </div>
      <div className="flex h-[26px] shrink-0 items-center gap-[5px] rounded-tl-lg bg-linear-to-r from-[#dfdfdf] to-[#f5f5f5] pl-[7px]">
        <button type="button" aria-label="Список" className="border border-[#999] border-r-white border-b-white bg-[#f3f3f3] px-px py-px">
          <Icon name="list" />
        </button>
        <button type="button" aria-label="Избранное">
          <Icon name="star" />
        </button>
        <button type="button" aria-label="Панель">
          <Icon name="board" />
        </button>
      </div>
      {sections.map((section) => (
        <section key={section.title}>
          <h2 className="mt-px flex h-[26px] items-center gap-2 rounded-tl-lg bg-linear-to-r from-[#dfdfdf] to-[#fafafa] pl-[10px] font-['DejaVu_Sans_Condensed','DejaVu_Sans',sans-serif] font-bold whitespace-nowrap text-black">
            <Icon name={section.icon} />
            <span className="pt-[2px]">{section.title}</span>
            {section.icon === 'plus' ? <Chevron className="mr-1 ml-auto text-[#555]" /> : null}
          </h2>
          {section.links.length > 0 ? (
            <ul className="pt-[2px] pb-[15px] pl-[18px]">
              {section.links.map((link) => (
                <li key={link} className="group flex border-l border-dotted border-[#17508c] last:border-transparent">
                  <span className="mr-px h-[11px] w-[13px] shrink-0 border-b border-dotted border-[#17508c] group-last:-ml-px group-last:w-[14px] group-last:border-l" />
                  {link === 'Менеджер файлов' ? (
                    <span className="leading-4 whitespace-nowrap text-black">{link}</span>
                  ) : (
                    <a href="#" className={`text-[#1d5799] underline ${link.startsWith('Настройка') ? 'w-[130px] pt-[2px] pb-[2px] leading-3' : 'leading-4 whitespace-nowrap'}`}>
                      {link}
                    </a>
                  )}
                </li>
              ))}
            </ul>
          ) : null}
        </section>
      ))}
    </aside>
  )
}

function FileManager() {
  return (
    <main className="flex min-w-0 flex-1 flex-col bg-white">
      <div className="flex h-[25px] justify-end gap-1">
        <div className="flex w-[194px] items-center gap-24 bg-[#eee] pl-5">
          <Icon name="bluePage" />
          <Icon name="crown" />
        </div>
        <div className="flex w-[250px] items-center bg-[#eee] pl-4">
          <Icon name="monitor" />
          <Icon name="help" className="ml-[73px] size-4" />
          <a href="#" className="ml-1 text-[#1d5799] underline">Помощь</a>
          <Icon name="power" className="ml-[14px] size-4" />
          <a href="#" className="ml-1 text-[#1d5799] underline">Выйти</a>
        </div>
      </div>
      <div className="flex h-[63px] items-center justify-end gap-2 pr-[22px] font-['DejaVu_Sans',sans-serif] text-[10px] leading-3 text-black">
        <button type="button" className="flex flex-col items-center gap-[2px]">
          <Icon name="download" className="size-6" />
          Скачать
        </button>
        <button type="button" className="flex flex-col items-center gap-[2px]">
          <Icon name="upload" className="size-6" />
          Закачать
        </button>
      </div>
      <div className="h-[26px] bg-[#afc8ec]" />
      <div className="flex min-h-0 flex-1">
        <div className="mr-[2px] flex-1 pt-5">
          <div className="h-5 bg-[#eee]" />
          <div className="h-5 bg-[#4c7fb6]" />
        </div>
        <div className="flex w-4 flex-col items-center justify-between bg-[#f0f0f0] py-[6px] text-[#bbb]">
          <Chevron up />
          <Chevron />
        </div>
      </div>
      <div className="flex h-[26px] shrink-0 items-center bg-[#afc8ec] font-['DejaVu_Sans_Condensed','DejaVu_Sans',sans-serif] font-bold text-black">
        <div className="h-full w-[660px] border-r border-white pl-3 leading-7">Выделено - 1</div>
        <div className="h-full pl-3 leading-7">218</div>
        <Icon name="excel" className="ml-auto size-4" />
      </div>
    </main>
  )
}

const encodings = ['437', '500', '500V1', '850', '851', '852', '855', '856', '857', '860', '861', '862', '863', '864', '865', '866', '866NAV', '869', '874', '904']

function EditFileDialog() {
  const [encoding, setEncoding] = useState('437')
  const [highlighted, setHighlighted] = useState('863')

  return (
    <>
      <div className="absolute top-4 right-[126px] bottom-2 left-[137px] rounded-tr-lg bg-black/25" />
      <div role="dialog" aria-labelledby="dialog-title" className="absolute top-2 right-[132px] bottom-4 left-[126px] flex flex-col rounded-t-lg border border-[#4c7fb6] bg-[#eee]">
        <header className="flex h-[29px] shrink-0 items-center rounded-t-md bg-[#4c7fb6] pr-[9px] pl-[22px] text-white">
          <h1 id="dialog-title" className="font-['DejaVu_Sans_Condensed','DejaVu_Sans',sans-serif] text-xs font-bold">Редактировать файл - index.html</h1>
          <div className="ml-auto flex items-center gap-[6px] pb-[2px]">
            <button type="button" aria-label="Закрепить"><Icon name="pin" className="size-[14px]" /></button>
            <button type="button" aria-label="Справка"><Icon name="question" className="size-[14px]" /></button>
            <button type="button" aria-label="По ширине"><Icon name="fit" className="size-[15px]" /></button>
            <button type="button" aria-label="Закрыть"><Icon name="cross" className="size-[14px]" /></button>
          </div>
        </header>
        <form className="flex min-h-0 flex-1 flex-col pr-6 pb-[23px] pl-[22px]" onSubmit={(event) => event.preventDefault()}>
          <p className="flex h-[50px] shrink-0 items-center justify-center pl-7 text-[#c00012]">
            <b className="mr-[10px] font-['DejaVu_Sans_Condensed','DejaVu_Sans',sans-serif]">Ошибка:</b>
            <span>Конвертация в 'UTF-8' не поддерживается на стороне сервера</span>
            <a href="#" className="ml-[3px] text-[#1d5799] underline">Подробнее</a>
          </p>
          <p className="h-6 shrink-0 leading-6 text-[#c00012]">Предупреждение: непечатаемые символы не отображаются, сохранение запрещено</p>
          <div className="grid shrink-0 grid-cols-[63fr_62fr] items-center text-black">
            <label htmlFor="encoding" className="pr-3 text-right">Кодировка</label>
            <div className="relative font-['DejaVu_Sans',sans-serif]">
              <select
                id="encoding"
                value={encoding}
                onChange={(event) => setEncoding(event.target.value)}
                className="block h-[18px] w-full appearance-none border border-[#c8963e] bg-white pl-1 leading-[16px] outline-1 outline-[#eec272]"
              >
                {encodings.map((item) => (
                  <option key={item}>{item}</option>
                ))}
              </select>
              <span className="pointer-events-none absolute top-px right-px flex h-4 w-[17px] items-center justify-center border border-[#aaa] bg-[#ececec]">
                <Chevron className="text-[#444]" />
              </span>
              <div className="absolute inset-x-0 top-full z-10 flex border border-[#7f9db9] bg-white">
                <ul role="listbox" aria-label="Кодировка" className="flex-1 leading-[13px]">
                  {encodings.map((item) => (
                    <li
                      key={item}
                      role="option"
                      aria-selected={item === highlighted}
                      onMouseEnter={() => setHighlighted(item)}
                      onClick={() => setEncoding(item)}
                      className={`pl-1 ${item === highlighted ? 'bg-[#3399ff] text-white' : ''}`}
                    >
                      {item}
                    </li>
                  ))}
                </ul>
                <div className="flex w-[17px] flex-col items-center bg-[#f0f0f0] py-[6px] text-[#555]">
                  <Chevron up />
                  <div className="mt-[5px] h-[17px] w-[15px] bg-[#cdcdcd]" />
                  <Chevron className="mt-auto" />
                </div>
              </div>
            </div>
          </div>
          <textarea aria-label="Содержимое файла" className="mt-[5px] block min-h-0 w-full flex-1 border border-[#999] bg-white" />
          <button type="submit" className="mx-auto mt-8 h-[22px] w-[100px] shrink-0 border border-[#808080] border-t-white border-l-white bg-[#d4d0c8] text-[#444]">
            Отмена
          </button>
        </form>
      </div>
    </>
  )
}

const downloads = [
  { icon: 'mp3', name: 'Zemfira - YA uhozh....mp3' },
  { icon: 'zip', name: 'verstak.zip' },
]

function DownloadsBar() {
  return (
    <footer className="flex h-[43px] shrink-0 items-center gap-[2px] border-t border-[#e9e9e9] bg-[#dedede] pr-3 pl-[3px] text-black">
      {downloads.map((file) => (
        <div key={file.name} className="flex h-9 w-[206px] rounded-sm border border-[#a8a8a8] bg-linear-to-b from-[#f0f0f0] to-[#e2e2e2]">
          <button type="button" className="flex min-w-0 flex-1 items-center gap-3 pl-[9px] whitespace-nowrap">
            <Icon name={file.icon} />
            {file.name}
          </button>
          <button type="button" aria-label="Действия" className="flex w-[14px] justify-center border-l border-[#bbb] pt-3">
            <svg viewBox="0 0 6 4" className="block h-1 w-[6px]">
              <path d="M0 0h6L3 3.500z" fill="#666" />
            </svg>
          </button>
        </div>
      ))}
      <a href="#" className="ml-auto flex items-center gap-[6px]">
        <Icon name="arrowDown" className="size-[14px]" />
        <span className="underline">Все загрузки...</span>
      </a>
      <button type="button" aria-label="Закрыть панель загрузок" className="ml-4">
        <svg viewBox="0 0 10 10" className="block size-[10px]">
          <path d="m1 1 8 8m0-8-8 8" stroke="#444" strokeWidth="2.600" />
        </svg>
      </button>
    </footer>
  )
}

export default function App() {
  return (
    <div className="flex h-screen overflow-hidden bg-white">
      <Taskbar />
      <div className="flex min-w-0 flex-1 flex-col font-['Open_Sans',sans-serif] text-xs">
        <TabStrip />
        <div className="bg-linear-to-b from-[#fafafa] to-[#dedede] pt-px">
          <AddressBar />
          <BookmarksBar />
        </div>
        <div className="relative flex min-h-0 flex-1 font-['Roboto',sans-serif] text-[11px]">
          <Sidebar />
          <FileManager />
          <EditFileDialog />
        </div>
        <DownloadsBar />
      </div>
    </div>
  )
}
